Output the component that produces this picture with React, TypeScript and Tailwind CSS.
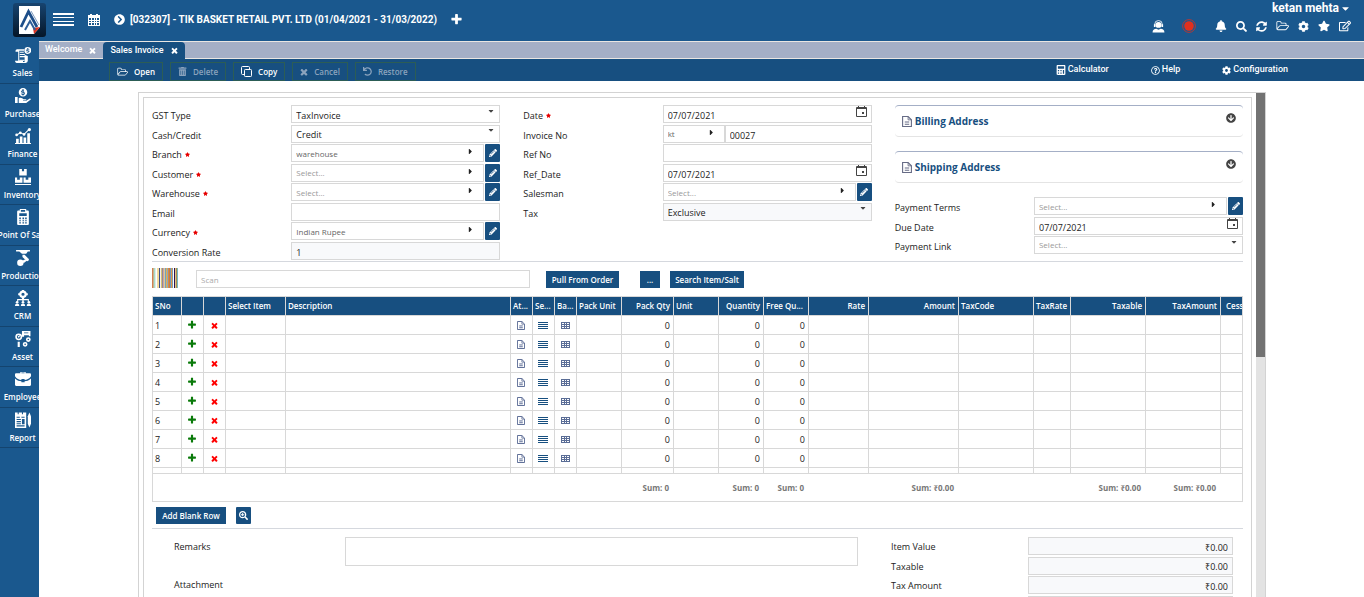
import { useState } from "react";
import type { ReactNode } from "react";
import {
  FaBell,
  FaCalculator,
  FaCaretDown,
  FaCaretRight,
  FaChevronCircleRight,
  FaCog,
  FaPencilAlt,
  FaRegEdit,
  FaRegQuestionCircle,
  FaSearch,
  FaSearchPlus,
  FaStar,
  FaSyncAlt,
  FaTrashAlt,
  FaUndo,
  FaArrowCircleDown,
} from "react-icons/fa";

/* ---------- icons ---------- */

function Plus({ className }: { className?: string }) {
  return (
    <svg viewBox="0 0 1792 1792" fill="currentColor" className={className} aria-hidden="true">
      <path d="M1600 736v192q0 40-28 68t-68 28h-416v416q0 40-28 68t-68 28h-192q-40 0-68-28t-28-68v-416h-416q-40 0-68-28t-28-68v-192q0-40 28-68t68-28h416v-416q0-40 28-68t68-28h192q40 0 68 28t28 68v416h416q40 0 68 28t28 68z" />
    </svg>
  );
}

function Times({ className }: { className?: string }) {
  return (
    <svg viewBox="200 200 1392 1392" fill="currentColor" className={className} aria-hidden="true">
      <path d="M1490 1322q0 40-28 68l-136 136q-28 28-68 28t-68-28l-294-294-294 294q-28 28-68 28t-68-28l-136-136q-28-28-28-68t28-68l294-294-294-294q-28-28-28-68t28-68l136-136q28-28 68-28t68 28l294 294 294-294q28-28 68-28t68 28l136 136q28 28 28 68t-28 68l-294 294 294 294q28 28 28 68z" />
    </svg>
  );
}

function FolderOpen({ className }: { className?: string }) {
  return (
    <svg viewBox="0 0 1984 1792" fill="currentColor" className={className} aria-hidden="true">
      <path d="M1845 931q0-35-53-35h-1088q-40 0-85.500 21.500t-71.500 52.500l-294 363q-18 24-18 40 0 35 53 35h1088q40 0 86-22t71-53l294-363q18-22 18-39zm-1141-163h768v-160q0-40-28-68t-68-28h-576q-40 0-68-28t-28-68v-64q0-40-28-68t-68-28h-320q-40 0-68 28t-28 68v853l256-315q44-53 116-87.500t140-34.500zm1269 163q0 62-46 120l-295 363q-43 53-116 87.500t-140 34.500h-1088q-92 0-158-66t-66-158v-960q0-92 66-158t158-66h320q92 0 158 66t66 158v32h544q92 0 158 66t66 158v160h192q54 0 99 24.500t67 70.500q15 32 15 68z" />
    </svg>
  );
}

function FileText({ className }: { className?: string }) {
  return (
    <svg viewBox="0 0 9 10" fill="none" stroke="currentColor" className={className} aria-hidden="true">
      <path d="M.5.5h5l3 3v6h-8z" />
      <path d="M5.500.5v3h3" strokeWidth=".8" />
      <path d="M2.500 5.500h4M2.500 7.500h4" />
    </svg>
  );
}

function Copy() {
  return (
    <svg viewBox="0 0 11 11" className="size-[11px]" fill="none" stroke="currentColor" aria-hidden="true">
      <path d="M3 8.500H1.500a1 1 0 0 1-1-1v-6a1 1 0 0 1 1-1h6a1 1 0 0 1 1 1V3" />
      <rect x="3.500" y="3.500" width="7" height="7" rx=".8" />
    </svg>
  );
}

function Logo() {
  return (
    <svg viewBox="0 0 33 34" className="h-[34px] w-[33px]" role="img" aria-label="Logo">
      <defs>
        <linearGradient id="plate" x1="0" y1="0" x2="0" y2="1">
          <stop offset="0" stopColor="#174470" />
          <stop offset="1" stopColor="#051628" />
        </linearGradient>
      </defs>
      <rect width="33" height="34" rx="3" fill="url(#plate)" />
      <path d="M6 3h21v21l-6 7H6z" fill="#fff" />
      <path d="M20 25l7-1-6 7z" fill="#e0301e" />
      <path d="M8 24 15.500 8.500 24 24" fill="none" stroke="#1d4e89" strokeWidth="2.800" />
      <path d="M12 27l5-9 5 9" fill="none" stroke="#2f5f98" strokeWidth="2" />
      <path d="M18 8l8 14" fill="none" stroke="#7f9cc0" strokeWidth="1" />
    </svg>
  );
}

function Agent() {
  return (
    <svg viewBox="0 0 24 24" fill="currentColor" className="size-[13px]" aria-hidden="true">
      <circle cx="12" cy="9" r="5.500" />
      <path d="M5 10V8a7 7 0 0 1 14 0v2" fill="none" stroke="currentColor" strokeWidth="1.500" />
      <path d="M3.500 8h3v5h-3zM17.500 8h3v5h-3z" />
      <path d="M8 16l4 2 4-2c4 .5 7 2 7 7H1c0-5 3-6.500 7-7z" />
    </svg>
  );
}

const stripes = [
  "#d0824f", "#c8b090", "#a9dcc8", "#dcefe8", "#ffffff", "#f3d9a0", "#f5dc94", "#3c4c8c", "#f0f0f0",
  "#d8c070", "#8c86a8", "#dba48c", "#c9cdb0", "#7aa0b4", "#e6b050", "#8ca8c0", "#d98c40", "#c07a50",
  "#6c9cc0", "#e09848", "#7c9cb0", "#ffffff", "#2c0f52", "#dfc489", "#a88c50", "#74b8c4",
];

function Barcode() {
  return (
    <svg viewBox="0 0 26 20" className="h-5 w-[26px] shrink-0" shapeRendering="crispEdges" aria-hidden="true">
      {stripes.map((fill, x) => (
        <rect key={x} x={x} y="0" width="1" height="20" fill={fill} />
      ))}
    </svg>
  );
}

function EventIcon() {
  return (
    <svg viewBox="0 0 11 11" className="size-[11px]" fill="none" stroke="#444" aria-hidden="true">
      <path d="M.5 1.500h10v9H.5zM.5 2.500h10" />
      <path d="M2.500 0v2M8.500 0v2" />
      <path d="M6 6h2v2H6z" fill="#444" stroke="none" />
    </svg>
  );
}

/* ---------- sidebar ---------- */

const solid = { viewBox: "0 0 30 30", fill: "currentColor", className: "size-4", "aria-hidden": true } as const;

const modules: { name: string; icon: ReactNode }[] = [
  {
    name: "Sales",
    icon: (
      <svg {...solid}>
        <path d="M4 4h14a8 8 0 0 0 6 13v9a4 4 0 0 1-4 4H3a4 4 0 0 1-3-4h15v2h3V19h-9v-2h9v-2H9v-2h8v-2H9V9h7V7H8v19H6V9H1V7a3 3 0 0 1 3-3z" />
        <path fillRule="evenodd" d="M24 0a6 6 0 1 1 0 13 6 6 0 0 1 0-13zm-1 2v2l-2 1v2l4 1v1h-4v1h2v1h2v-1l2-1V7l-4-1V5h4V4h-2V2z" />
        <path d="M8 24h10v2H8z" />
      </svg>
    ),
  },
  {
    name: "Purchase",
    icon: (
      <svg {...solid}>
        <path
          fillRule="evenodd"
          d="M15 0a8 8 0 1 1 0 16 8 8 0 0 1 0-16zm-1 2v2c-4 1-3 5 1 5 2 0 2 2 0 2l-3-1v2l2 1v1h2v-1c4-1 3-6-1-6-2 0-2-1 0-1l2 1V5l-1-1V2z"
        />
        <path d="M0 17h5v11H0zM7 19c4-2 7 0 9 2h4c2 0 2 2 0 2h-5v1h6l6-4c2-1 4 1 2 2l-8 6H7z" />
      </svg>
    ),
  },
  {
    name: "Finance",
    icon: (
      <svg {...solid}>
        <path d="M2 20h5v8H2zM9 16h5v12H9zM16 18h5v10h-5zM23 10h5v18h-5zM0 28h30v2H0z" />
        <path d="M3 13l7-4 7 3 9-9" fill="none" stroke="currentColor" strokeWidth="2" />
        <circle cx="3" cy="13" r="2.500" />
        <circle cx="10" cy="9" r="2.500" />
        <circle cx="17" cy="12" r="2.500" />
        <circle cx="27" cy="3" r="3" />
      </svg>
    ),
  },
  {
    name: "Inventory",
    icon: (
      <svg {...solid}>
        <path d="M8 0h5v4h4V0h5v12H8zM0 16h4v4h5v-4h5v10H0zM16 16h4v4h5v-4h5v10H16zM0 28h30v2H0z" />
      </svg>
    ),
  },
  {
    name: "Point Of Sale",
    icon: (
      <svg {...solid}>
        <path
          fillRule="evenodd"
          d="M9 0h12v3h3a2 2 0 0 1 2 2v23a2 2 0 0 1-2 2H6a2 2 0 0 1-2-2V5a2 2 0 0 1 2-2h3zm2 2v3h8V2zM8 8v5h14V8zm0 8v3h3v-3zm6 0v3h3v-3zm5 0v3h3v-3zM8 21v2h3v-2zm6 0v2h3v-2zm5 0v2h3v-2zM8 25v2h3v-2zm6 0v2h3v-2zm5 0v2h3v-2z"
        />
      </svg>
    ),
  },
  {
    name: "Production",
    icon: (
      <svg {...solid}>
        <path d="M2 0h26v3h-4l-3 4h-8L8 3H2zM14 9h4l6 6-2 3-4-1-4-4z" />
        <circle cx="10" cy="24" r="6" />
        <circle cx="23" cy="18" r="3" />
        <path d="M14 20l6-3 2 3-6 5z" />
      </svg>
    ),
  },
  {
    name: "CRM",
    icon: (
      <svg {...solid}>
        <circle cx="15" cy="8" r="5" fill="none" stroke="currentColor" strokeWidth="4" />
        <path d="M13 0h4v3h-4zM13 13h4v7h-4zM6 6h4v4H6zM20 6h4v4h-4zM4 17h22v5h-2v-3H6v3H4z" />
        <circle cx="4" cy="23" r="2.500" />
        <circle cx="15" cy="23" r="2.500" />
        <circle cx="26" cy="23" r="2.500" />
        <path d="M0 30c0-6 8-6 8 0zM11 30c0-6 8-6 8 0zM22 30c0-6 8-6 8 0z" />
      </svg>
    ),
  },
  {
    name: "Asset",
    icon: (
      <svg {...solid}>
        <circle cx="7" cy="11" r="5" fill="none" stroke="currentColor" strokeWidth="3" />
        <path d="M5 10l2 3 4-6M5 20h4v10H5zM13 0h16v10h-3V8h-9v3h-4zM17 3v1h8V3z" />
        <circle cx="25" cy="16" r="3" fill="none" stroke="currentColor" strokeWidth="3" />
        <circle cx="19" cy="25" r="3" fill="none" stroke="currentColor" strokeWidth="3" />
      </svg>
    ),
  },
  {
    name: "Employee",
    icon: (
      <svg {...solid}>
        <path
          fillRule="evenodd"
          d="M10 4V2h10v2h8a2 2 0 0 1 2 2v4c-3 5-8 7-12 7v-2h-6v2C8 17 3 15 0 10V6a2 2 0 0 1 2-2zm2 0h6V3h-6z"
        />
        <path d="M0 14c4 4 8 5 12 5v2h6v-2c4 0 8-1 12-5v12a2 2 0 0 1-2 2H2a2 2 0 0 1-2-2z" />
      </svg>
    ),
  },
  {
    name: "Report",
    icon: (
      <svg {...solid}>
        <path
          fillRule="evenodd"
          d="M0 1h5v3h2V1h6v3h2V1h6v29H0zm3 8v2h6V9zm9 0v2h6V9zM3 13v2h8v-2zm10 0v10h5V13zM3 17v2h8v-2zm0 4v2h8v-2zm0 4v2h15v-2z"
        />
        <path d="M24 8l3-7 3 7v14l-3 7-3-7z" />
      </svg>
    ),
  },
];

function Sidebar() {
  return (
    <nav className="w-[39px] shrink-0 overflow-hidden bg-[#1a588e] pt-[2px]">
      <ul className="flex h-[405px] w-[45px] flex-col">
        {modules.map((m) => (
          <li key={m.name} className="flex-1 border-b border-[#14446f]">
            <a href="#" className="flex flex-col items-center gap-1 pt-1 text-white">
              {m.icon}
              <span className="text-[8px] leading-3 font-semibold whitespace-nowrap">{m.name}</span>
            </a>
          </li>
        ))}
      </ul>
    </nav>
  );
}

/* ---------- header ---------- */

function Header() {
  return (
    <header className="flex h-[41px] shrink-0 items-start justify-between bg-[#1a588e] text-white">
      <div className="flex h-[39px] items-center pl-[13px]">
        <Logo />
        <button type="button" aria-label="Menu" className="ml-[7px]">
          <svg viewBox="0 0 21 13" className="h-[13px] w-[21px]" fill="currentColor" shapeRendering="crispEdges">
            <path d="M0 0h21v2H0zM0 4h21v1H0zM0 8h21v1H0zM0 11h21v2H0z" />
          </svg>
        </button>
        <button type="button" aria-label="Calendar" className="ml-[14px]">
          <svg viewBox="0 0 12 12" className="size-3" fill="currentColor">
            <path fillRule="evenodd" d="M2 0h2v1h4V0h2v1h2v11H0V1h2zM1 4v2h2V4zm3 0v2h2V4zm3 0v2h1V4zm2 0v2h2V4zM1 7v1h2V7zm3 0v1h2V7zm3 0v1h1V7zm2 0v1h2V7zM1 9v2h2V9zm3 0v2h2V9zm3 0v2h1V9zm2 0v2h2V9z" />
          </svg>
        </button>
        <FaChevronCircleRight className="ml-[14px] size-[11px]" />
        <h1 className="ml-[5px] font-[Roboto,sans-serif] text-[10px] font-bold">
          [032307] - TIK BASKET RETAIL PVT. LTD (01/04/2021 - 31/03/2022)
        </h1>
        <button type="button" aria-label="Add company" className="ml-[13px]">
          <Plus className="size-[13px]" />
        </button>
      </div>
      <div className="flex flex-col items-end pr-[13px]">
        <button type="button" className="flex items-center gap-px font-[Roboto,sans-serif] text-[12px] leading-4 font-bold">
          ketan mehta <FaCaretDown className="size-[11px]" />
        </button>
        <div className="flex h-5 items-center gap-[9px]">
          <button type="button" aria-label="Support"><Agent /></button>
          <button type="button" aria-label="Record" className="mr-[10px] ml-2">
            <svg viewBox="0 0 14 14" className="size-[14px]">
              <circle cx="7" cy="7" r="6.400" fill="none" stroke="#d9301f" strokeWidth=".8" />
              <circle cx="7" cy="7" r="4.800" fill="#e0301e" />
            </svg>
          </button>
          <button type="button" aria-label="Notifications"><FaBell className="size-[12px]" /></button>
          <button type="button" aria-label="Search"><FaSearch className="size-[11px]" /></button>
          <button type="button" aria-label="Refresh"><FaSyncAlt className="size-[11px]" /></button>
          <button type="button" aria-label="Open"><FolderOpen className="h-3 w-[13px]" /></button>
          <button type="button" aria-label="Settings"><FaCog className="size-[11px]" /></button>
          <button type="button" aria-label="Favourites"><FaStar className="size-[12px]" /></button>
          <button type="button" aria-label="Edit"><FaRegEdit className="size-[12px]" /></button>
        </div>
      </div>
    </header>
  );
}

function Tabs() {
  return (
    <div className="flex h-[18px] border-y border-[#e9e6e2] bg-[#a4afc6] font-[Roboto,sans-serif] text-[9px] font-medium text-white">
      <div className="flex items-center gap-[7px] px-[7px] pl-[6px]">
        <a href="#">Welcome</a>
        <button type="button" aria-label="Close Welcome"><Times className="size-[7px]" /></button>
      </div>
      <div className="-mb-px flex items-center gap-[7px] rounded-t-sm bg-[#174f80] px-[7px]">
        <a href="#">Sales Invoice</a>
        <button type="button" aria-label="Close Sales Invoice"><Times className="size-[7px]" /></button>
      </div>
    </div>
  );
}

function ToolButton({ icon, label, disabled }: { icon: ReactNode; label: string; disabled?: boolean }) {
  return (
    <button
      type="button"
      disabled={disabled}
      className="flex h-[19px] items-center gap-[6px] border border-[#2c5d55] px-[7px] text-[8px] font-semibold text-white disabled:text-[#8ba3bd]"
    >
      {icon}
      {label}
    </button>
  );
}

function Toolbar() {
  return (
    <div className="flex h-[22px] items-end justify-between bg-[#174f80] pl-[70px] text-white">
      <div className="flex gap-[7px]">
        <ToolButton icon={<FolderOpen className="h-[10px] w-[11px]" />} label="Open" />
        <ToolButton icon={<FaTrashAlt className="size-[9px]" />} label="Delete" disabled />
        <ToolButton icon={<Copy />} label="Copy" />
        <ToolButton icon={<Times className="size-[8px]" />} label="Cancel" disabled />
        <ToolButton icon={<FaUndo className="size-[9px]" />} label="Restore" disabled />
      </div>
      <div className="flex h-full items-center gap-[42px] pr-[76px] font-[Roboto,sans-serif] text-[9px] font-medium">
        <a href="#" className="flex items-center gap-[2px]"><FaCalculator className="size-[10px]" />Calculator</a>
        <a href="#" className="flex items-center gap-[2px]"><FaRegQuestionCircle className="size-[9px]" />Help</a>
        <a href="#" className="flex items-center gap-[2px]"><FaCog className="size-[9px]" />Configuration</a>
      </div>
    </div>
  );
}

/* ---------- form ---------- */

interface FieldProps {
  id: string;
  label: string;
  kind: "select" | "lookup" | "date" | "text";
  value?: string;
  required?: boolean;
  edit?: boolean;
  readOnly?: boolean;
}

const box = "flex h-[18px] min-w-0 flex-1 items-center border border-[#d8d8d8]";

function Control({ id, kind, value = "", edit, readOnly }: FieldProps) {
  const [current, setCurrent] = useState(value);
  const bg = readOnly ? "bg-[#f8f9fb]" : "bg-white";

  if (kind === "select") {
    return (
      <div className={`${box} ${bg}`}>
        <select
          id={id}
          defaultValue={value}
          className={`h-full min-w-0 flex-1 appearance-none pl-1 leading-3 outline-none ${value ? "pt-[3px] text-[9px] text-[#222]" : "text-[8px] text-[#999]"}`}
        >
          <option>{value || "Select..."}</option>
        </select>
        <FaCaretDown className="mr-1 mb-[7px] size-2 text-[#444]" />
      </div>
    );
  }

  if (kind === "lookup") {
    return (
      <>
        <div className={`${box} ${bg}`}>
          <input
            id={id}
            value={current}
            onChange={(e) => setCurrent(e.target.value)}
            placeholder="Select..."
            className="h-full min-w-0 flex-1 pl-1 text-[8px] text-[#666] outline-none placeholder:text-[#999]"
          />
          <button type="button" aria-label="Open list" className="mr-2 mb-[3px]">
            <FaCaretRight className="size-[9px] text-[#222]" />
          </button>
        </div>
        {edit && (
          <button type="button" aria-label="Edit" className="ml-px flex h-[18px] w-[15px] items-center justify-center rounded-[1px] bg-[#174f80] text-white">
            <FaPencilAlt className="size-2" />
          </button>
        )}
      </>
    );
  }

  return (
    <div className={`${box} ${bg}`}>
      <input
        id={id}
        value={current}
        readOnly={readOnly}
        onChange={(e) => setCurrent(e.target.value)}
        className="h-full min-w-0 flex-1 pt-[3px] pl-1 text-[9px] text-[#222] outline-none"
      />
      {kind === "date" && (
        <button type="button" aria-label="Pick date" className="mr-[4px] mb-[5px]">
          <EventIcon />
        </button>
      )}
    </div>
  );
}

function Field(props: FieldProps) {
  return (
    <div className="flex min-h-0 items-start">
      <label htmlFor={props.id} className="flex w-2/5 shrink-0 items-center gap-[3px] text-[9px] leading-[21px] text-[#222]">
        {props.label}
        {props.required && <FaStar className="size-[5px] text-[#e60000]" />}
      </label>
      <Control {...props} />
    </div>
  );
}

function AddressPanel({ title }: { title: string }) {
  return (
    <section className="mb-[14px] flex h-8 justify-between rounded-sm border-t border-b border-t-[#a4afc6] border-b-[#e4e4e4] px-[7px]">
      <h2 className="flex items-center gap-[3px] text-[10px] font-bold text-[#174f80]">
        <FileText className="h-[11px] w-[10px] text-[#666b85]" />
        {title}
      </h2>
      <button type="button" aria-label={`Expand ${title}`} className="mt-[7px] h-[10px]">
        <FaArrowCircleDown className="size-[10px] text-[#444]" />
      </button>
    </section>
  );
}

function InvoiceForm() {
  return (
    <form className="grid h-[156px] grid-cols-3 items-start gap-x-[23px]">
      <div className="grid h-[156px] grid-rows-8">
        <Field id="gst" label="GST Type" kind="select" value="TaxInvoice" />
        <Field id="cash" label="Cash/Credit" kind="select" value="Credit" />
        <Field id="branch" label="Branch" kind="lookup" value="warehouse" required edit />
        <Field id="customer" label="Customer" kind="lookup" required edit />
        <Field id="warehouse" label="Warehouse" kind="lookup" required edit />
        <Field id="email" label="Email" kind="text" />
        <Field id="currency" label="Currency" kind="lookup" value="Indian Rupee" required edit />
        <Field id="rate" label="Conversion Rate" kind="text" value="1" readOnly />
      </div>
      <div className="grid h-[117px] grid-rows-6">
        <Field id="date" label="Date" kind="date" value="07/07/2021" required />
        <div className="flex min-h-0 items-start">
          <label htmlFor="invoice-no" className="w-2/5 shrink-0 text-[9px] leading-[21px] text-[#222]">Invoice No</label>
          <div className="flex w-[62px] shrink-0">
            <Control id="series" label="Series" kind="lookup" value="kt" />
          </div>
          <Control id="invoice-no" label="Invoice No" kind="text" value="00027" />
        </div>
        <Field id="ref-no" label="Ref No" kind="text" />
        <Field id="ref-date" label="Ref_Date" kind="date" value="07/07/2021" />
        <Field id="salesman" label="Salesman" kind="lookup" edit />
        <Field id="tax" label="Tax" kind="select" value="Exclusive" readOnly />
      </div>
      <div>
        <AddressPanel title="Billing Address" />
        <AddressPanel title="Shipping Address" />
        <div className="grid h-[59px] grid-rows-3">
          <Field id="terms" label="Payment Terms" kind="lookup" edit />
          <Field id="due" label="Due Date" kind="date" value="07/07/2021" />
          <Field id="link" label="Payment Link" kind="select" />
        </div>
      </div>
    </form>
  );
}

/* ---------- items grid ---------- */

const columns: { title: string; width: number; right?: boolean; cell?: string; sum?: string }[] = [
  { title: "SNo", width: 29, cell: "sno" },
  { title: "", width: 22, cell: "add" },
  { title: "", width: 22, cell: "remove" },
  { title: "Select Item", width: 60 },
  { title: "Description", width: 225 },
  { title: "At...", width: 22, cell: "file" },
  { title: "Se...", width: 22, cell: "list" },
  { title: "Ba...", width: 22, cell: "grid" },
  { title: "Pack Unit", width: 45 },
  { title: "Pack Qty", width: 52, right: true, cell: "zero", sum: "Sum: 0" },
  { title: "Unit", width: 45 },
  { title: "Quantity", width: 45, right: true, cell: "zero", sum: "Sum: 0" },
  { title: "Free Qu...", width: 45, cell: "zero", sum: "Sum: 0" },
  { title: "Rate", width: 60, right: true },
  { title: "Amount", width: 90, right: true, sum: "Sum: ₹0.00" },
  { title: "TaxCode", width: 75 },
  { title: "TaxRate", width: 37, right: true },
  { title: "Taxable", width: 75, right: true, sum: "Sum: ₹0.00" },
  { title: "TaxAmount", width: 75, right: true, sum: "Sum: ₹0.00" },
  { title: "Cess", width: 75 },
];

function IconButton({ label, className, children }: { label: string; className: string; children: ReactNode }) {
  return (
    <button type="button" aria-label={label} className={`flex w-full items-center justify-center pr-px ${className}`}>
      {children}
    </button>
  );
}

function Cell({ kind, row }: { kind?: string; row: number }) {
  switch (kind) {
    case "sno":
      return <span className="block pt-px pl-[2px]">{row}</span>;
    case "zero":
      return <span className="block pt-px pr-[3px] text-right">0</span>;
    case "add":
      return (
        <IconButton label="Add row" className="text-[#0a7a0a]">
          <Plus className="size-[10px]" />
        </IconButton>
      );
    case "remove":
      return (
        <IconButton label="Delete row" className="text-[#f00]">
          <Times className="size-[7px]" />
        </IconButton>
      );
    case "file":
      return (
        <IconButton label="Attachment" className="text-[#4d5f8c]">
          <FileText className="h-[9px] w-2" />
        </IconButton>
      );
    case "list":
      return (
        <IconButton label="Serials" className="text-[#174f80]">
          <svg viewBox="0 0 10 7" className="h-[7px] w-[10px]" fill="currentColor" shapeRendering="crispEdges">
            <path d="M0 0h10v1H0zM0 2h10v1H0zM0 4h10v1H0zM0 6h10v1H0z" />
          </svg>
        </IconButton>
      );
    case "grid":
      return (
        <IconButton label="Batches" className="text-[#5a6d96]">
          <svg viewBox="0 0 9 7" className="h-[7px] w-[9px]" fill="none" stroke="currentColor" shapeRendering="crispEdges">
            <path d="M0 .5h9M0 2.500h9M0 4.500h9M0 6.500h9M.5 0v7M3.500 0v7M5.500 0v7M8.500 0v7" />
          </svg>
        </IconButton>
      );
    default:
      return null;
  }
}

function ColWidths() {
  return (
    <colgroup>
      {columns.map((c, i) => (
        <col key={i} style={{ width: c.width }} />
      ))}
    </colgroup>
  );
}

const action = "flex h-[17px] items-center justify-center bg-[#174f80] text-[8px] font-semibold text-white";

function ItemsGrid() {
  return (
    <div className="overflow-hidden border border-[#d8d8d8]">
      <div className="h-44 overflow-hidden">
        <table className="w-[1143px] table-fixed border-separate border-spacing-0">
          <ColWidths />
          <thead>
            <tr className="h-[19px]">
              {columns.map((c, i) => (
                <th
                  key={i}
                  className={`overflow-hidden border-r border-b border-[#d8d8d8] bg-[#174f80] py-0 text-[8px] leading-[18px] font-semibold whitespace-nowrap text-white ${c.right ? "pr-[3px] text-right" : "text-left"} ${c.title === "Cess" ? "pl-[5px]" : "pl-[2px]"}`}
                >
                  {c.title}
                </th>
              ))}
            </tr>
          </thead>
          <tbody className="text-[9px] leading-[17px] text-[#222]">
            {[1, 2, 3, 4, 5, 6, 7, 8, 9].map((row) => (
              <tr key={row} className="h-[19px]">
                {columns.map((c, i) => (
                  <td key={i} className="border-r border-b border-[#d8d8d8] p-0">
                    {row < 9 && <Cell kind={c.cell} row={row} />}
                  </td>
                ))}
              </tr>
            ))}
          </tbody>
        </table>
      </div>
      <table className="h-7 w-[1143px] table-fixed border-t border-[#d8d8d8]">
        <ColWidths />
        <tbody>
          <tr>
            {columns.map((c, i) => (
              <td key={i} className="p-0 text-[8px] font-bold whitespace-nowrap text-[#777]">
                <span className="flex justify-end pr-[5px]">{c.sum}</span>
              </td>
            ))}
          </tr>
        </tbody>
      </table>
    </div>
  );
}

function SummaryRow({ label }: { label: string }) {
  return (
    <label className="flex min-h-0 items-start text-[9px] leading-5 text-[#222]">
      <span className="w-2/5 shrink-0">{label}</span>
      <input
        readOnly
        defaultValue="₹0.00"
        className="h-[18px] min-w-0 flex-1 border border-[#d8d8d8] bg-[#f8f9fb] pt-[3px] pr-1 text-right text-[9px]"
      />
    </label>
  );
}

export default function App() {
  return (
    <div className="flex h-screen flex-col overflow-hidden bg-white font-['Open_Sans','Noto_Sans',sans-serif]">
      <Header />
      <div className="flex min-h-0 flex-1">
        <Sidebar />
        <div className="flex min-w-0 flex-1 flex-col">
          <Tabs />
          <Toolbar />
          <main className="mt-[11px] mr-[98px] ml-[99px] flex min-h-0 flex-1 border border-b-0 border-[#d3d3d3]">
            <div className="min-w-0 flex-1 overflow-hidden px-1 pt-1">
              <div className="border border-[#d3d3d3] px-2 pt-[7px]">
                <InvoiceForm />

                <section className="border-t border-[#d5d8de] pt-[6px]">
                  <div className="mb-2 flex h-5 items-end">
                    <Barcode />
                    <input
                      aria-label="Scan"
                      placeholder="Scan"
                      className="ml-[18px] h-[18px] w-[334px] border border-[#d8d8d8] pt-px pl-1 text-[8px] outline-none placeholder:text-[#aaa]"
                    />
                    <button type="button" className={`${action} ml-4 w-[73px]`}>Pull From Order</button>
                    <button type="button" className={`${action} ml-[21px] w-5`}>...</button>
                    <button type="button" className={`${action} ml-[10px] w-[74px]`}>Search Item/Salt</button>
                  </div>
                  <ItemsGrid />
                  <div className="flex gap-[10px] pt-[5px] pb-1 pl-1">
                    <button type="button" className={`${action} w-[70px]`}>Add Blank Row</button>
                    <button type="button" aria-label="Zoom" className={`${action} w-[15px] rounded-[1px]`}>
                      <FaSearchPlus className="size-[9px]" />
                    </button>
                  </div>
                </section>

                <section className="grid grid-cols-[2fr_1fr] gap-x-[33px] border-t border-[#d5d8de] pt-2 pr-[10px] pl-[22px]">
                  <div className="text-[9px] leading-5 text-[#222]">
                    <div className="mb-[9px] flex">
                      <label htmlFor="remarks" className="w-1/4 shrink-0">Remarks</label>
                      <textarea id="remarks" className="h-[29px] flex-1 resize-none border border-[#d8d8d8]" />
                    </div>
                    <span>Attachment</span>
                  </div>
                  <div className="grid h-[78px] grid-rows-4">
                    <SummaryRow label="Item Value" />
                    <SummaryRow label="Taxable" />
                    <SummaryRow label="Tax Amount" />
                    <SummaryRow label="" />
                  </div>
                </section>
              </div>
            </div>
            <div className="w-[9px] shrink-0 bg-[#e3e3e3]">
              <div className="h-[264px] bg-[#727272]" />
            </div>
          </main>
        </div>
      </div>
    </div>
  );
}
